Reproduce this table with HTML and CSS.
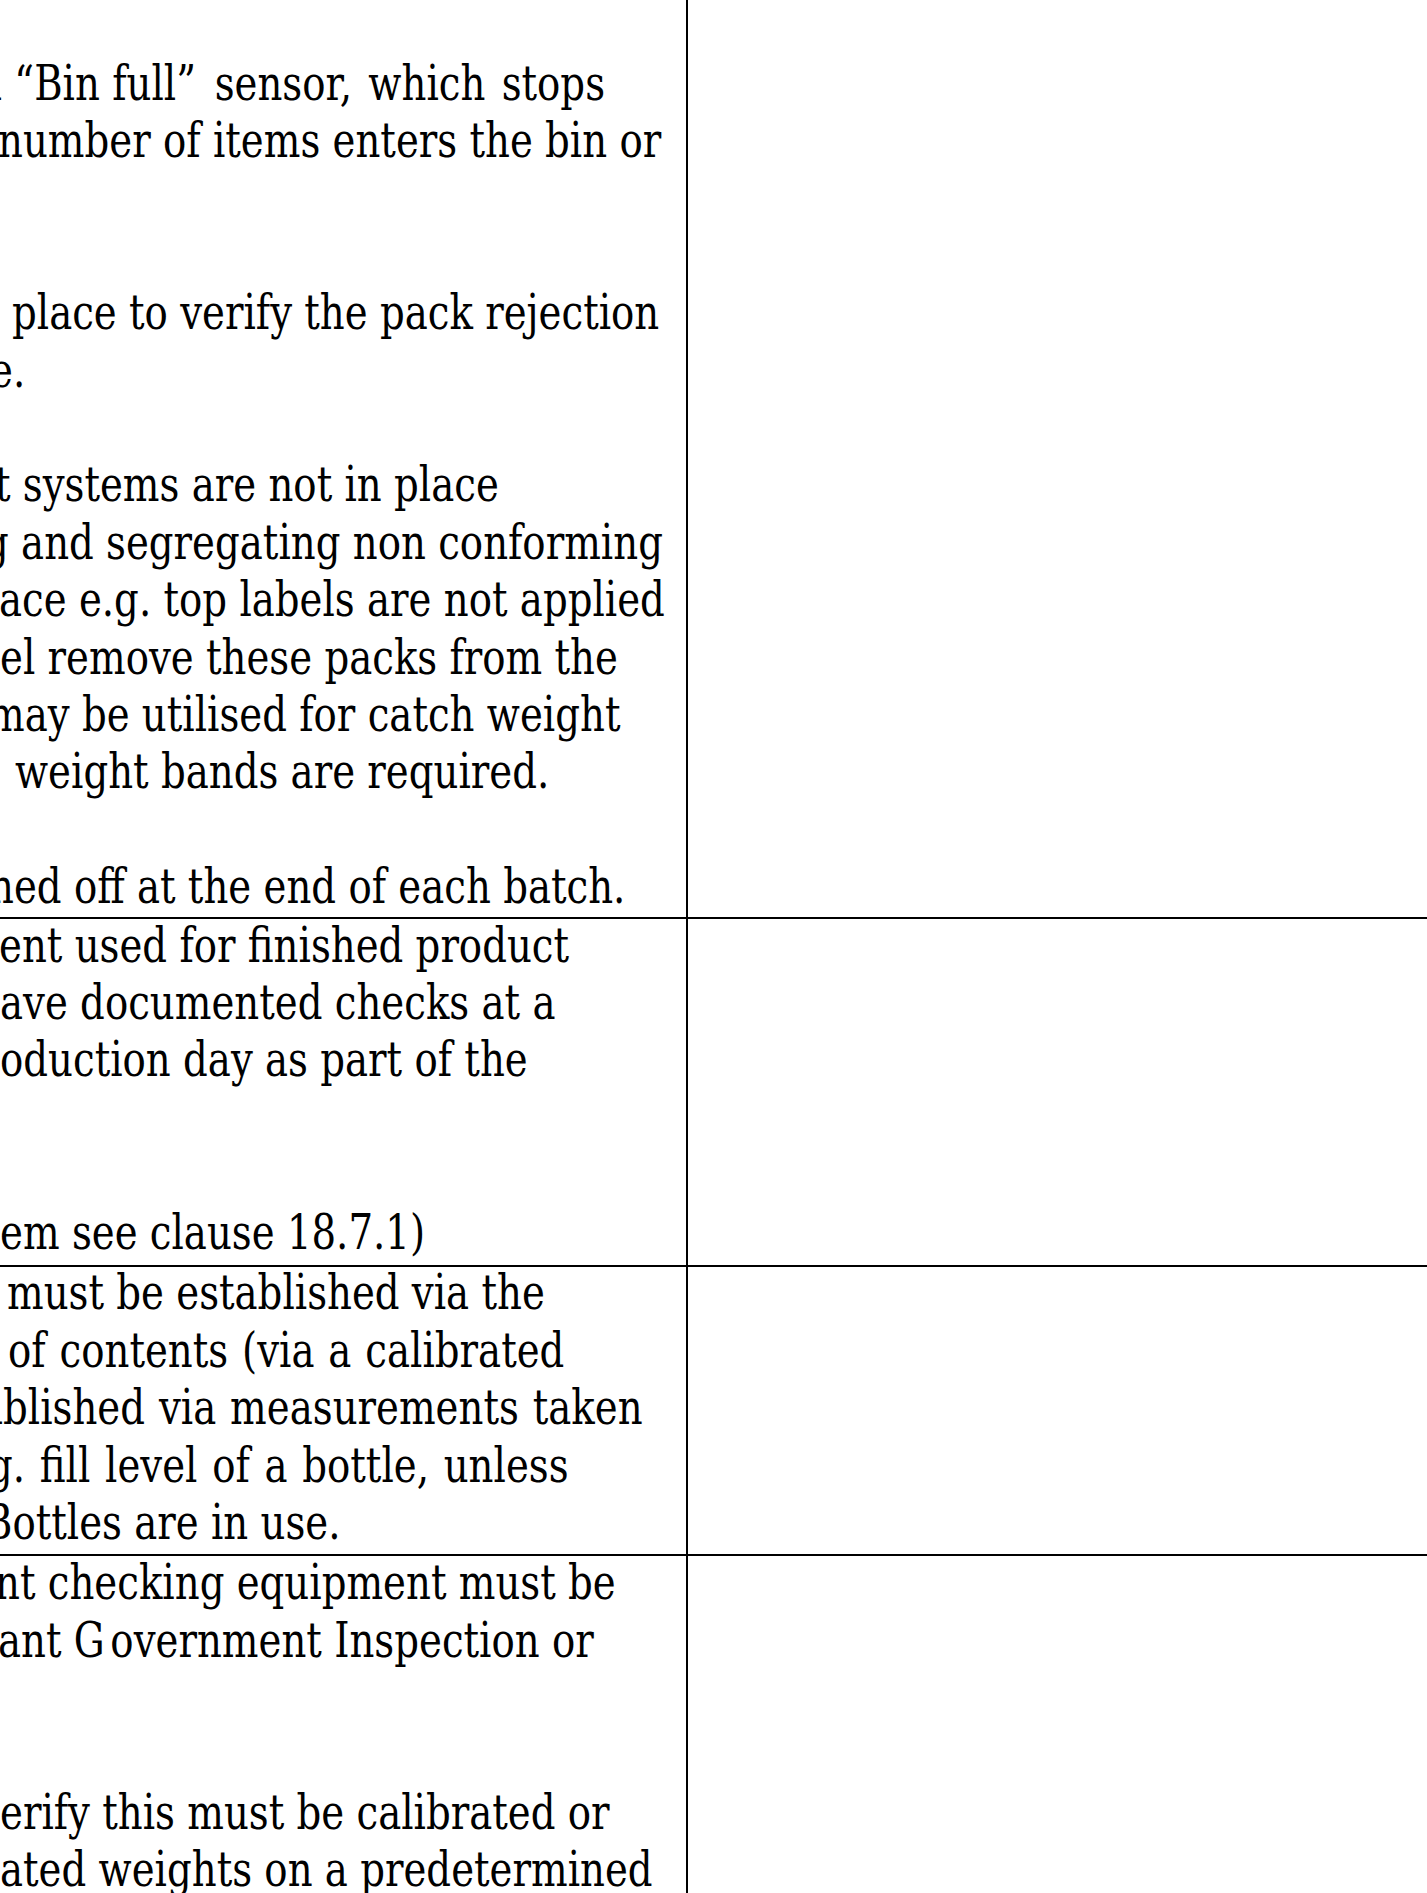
FILE: index.html
```html
<!DOCTYPE html>
<html lang="en">
<head>
<meta charset="utf-8">
<title>Weight control checklist</title>
<link rel="stylesheet" href="styles.css">
</head>
<body>
<div class="doc">
  <div class="row r1">
    <div class="cell-main">
      <div class="txt">
        <div class="ln sh-m21">a “Bin full”<span class="gap-quote"> </span><span class="ws-5">sensor, which stops</span></div>
        <div class="ln sh-m2">number of items enters the bin or</div>
        <div class="ln blank"></div>
        <div class="ln blank"></div>
        <div class="ln sh-12">place to verify the pack rejection</div>
        <div class="ln sh-m10">e.</div>
        <div class="ln blank"></div>
        <div class="ln sh-m5">t systems are not in place</div>
        <div class="ln sh-m16">g and segregating non conforming</div>
        <div class="ln sh-m1">ace e.g. top labels are not applied</div>
        <div class="ln sh-0">el remove these packs from the</div>
        <div class="ln sh-m12">may be utilised for catch weight</div>
        <div class="ln sh-15">weight bands are required.</div>
        <div class="ln blank"></div>
        <div class="ln sh-m11">hed off at the end of each batch.</div>
      </div>
    </div>
    <div class="cell-side"></div>
  </div>
  <div class="row r2">
    <div class="cell-main">
      <div class="txt">
        <div class="ln sh-m1">ent used for finished product</div>
        <div class="ln sh-0">ave documented checks at a</div>
        <div class="ln sh-0">oduction day as part of the</div>
        <div class="ln blank"></div>
        <div class="ln blank"></div>
        <div class="ln sh-0">em see clause 18.7.1)</div>
      </div>
    </div>
    <div class="cell-side"></div>
  </div>
  <div class="row r3">
    <div class="cell-main">
      <div class="txt">
        <div class="ln sh-7">must be established via the</div>
        <div class="ln sh-8 ws-2">of contents (via a calibrated</div>
        <div class="ln sh-m20 ws-2">ablished via measurements taken</div>
        <div class="ln sh-m12 ws-3">g. fill level of a bottle, unless</div>
        <div class="ln sh-m16">Bottles are in use.</div>
      </div>
    </div>
    <div class="cell-side"></div>
  </div>
  <div class="row r4">
    <div class="cell-main">
      <div class="txt">
        <div class="ln sh-m5">nt checking equipment must be</div>
        <div class="ln sh-m2">ant <span class="gap-after">G</span>overnment Inspection or</div>
        <div class="ln blank"></div>
        <div class="ln blank"></div>
        <div class="ln sh-0">erify this must be calibrated or</div>
        <div class="ln sh-0">ated weights on a predetermined</div>
        <div class="ln blank"></div>
      </div>
    </div>
    <div class="cell-side"></div>
  </div>
</div>
</body>
</html>
```
FILE: styles.css
```css
html, body {
  margin: 0;
  padding: 0;
  background: #ffffff;
  overflow: hidden;
}

.doc {
  font-family: "DejaVu Serif", "Liberation Serif", serif;
  font-size: 48px;
  line-height: 57.4px;
  color: #000000;
  width: 100%;
}

.row {
  display: grid;
  grid-template-columns: 688px 1fr;
  border-bottom: 2px solid #000000;
}

.cell-main {
  border-right: 2px solid #000000;
}

.txt {
  margin-top: -2.3px;
}

.r1 .cell-main { padding-top: 54.7px; padding-bottom: 1.3px; }
.r1 .txt { margin-top: 0; }
.r2 .cell-main { padding-bottom: 3.9px; }
.r3 .cell-main { padding-bottom: 2.3px; }
.r4 .txt { margin-top: -1.3px; }

.ln {
  height: 57.4px;
  white-space: nowrap;
  transform: scaleX(0.806);
  transform-origin: 0 50%;
}

.ws-2 { word-spacing: 2px; }
.ws-3 { word-spacing: 3px; }
.ws-5 { word-spacing: 5px; }

.gap-after { margin-right: 7px; }
.gap-quote { margin-left: 8px; }

.sh-m21 { margin-left: -21px; }
.sh-m20 { margin-left: -20px; }
.sh-m16 { margin-left: -16px; }
.sh-m12 { margin-left: -12px; }
.sh-m11 { margin-left: -11px; }
.sh-m10 { margin-left: -10px; }
.sh-m5 { margin-left: -5px; }
.sh-m2 { margin-left: -2px; }
.sh-m1 { margin-left: -1px; }
.sh-0 { margin-left: 0; }
.sh-7 { margin-left: 7px; }
.sh-8 { margin-left: 8px; }
.sh-12 { margin-left: 12px; }
.sh-15 { margin-left: 15px; }
```
